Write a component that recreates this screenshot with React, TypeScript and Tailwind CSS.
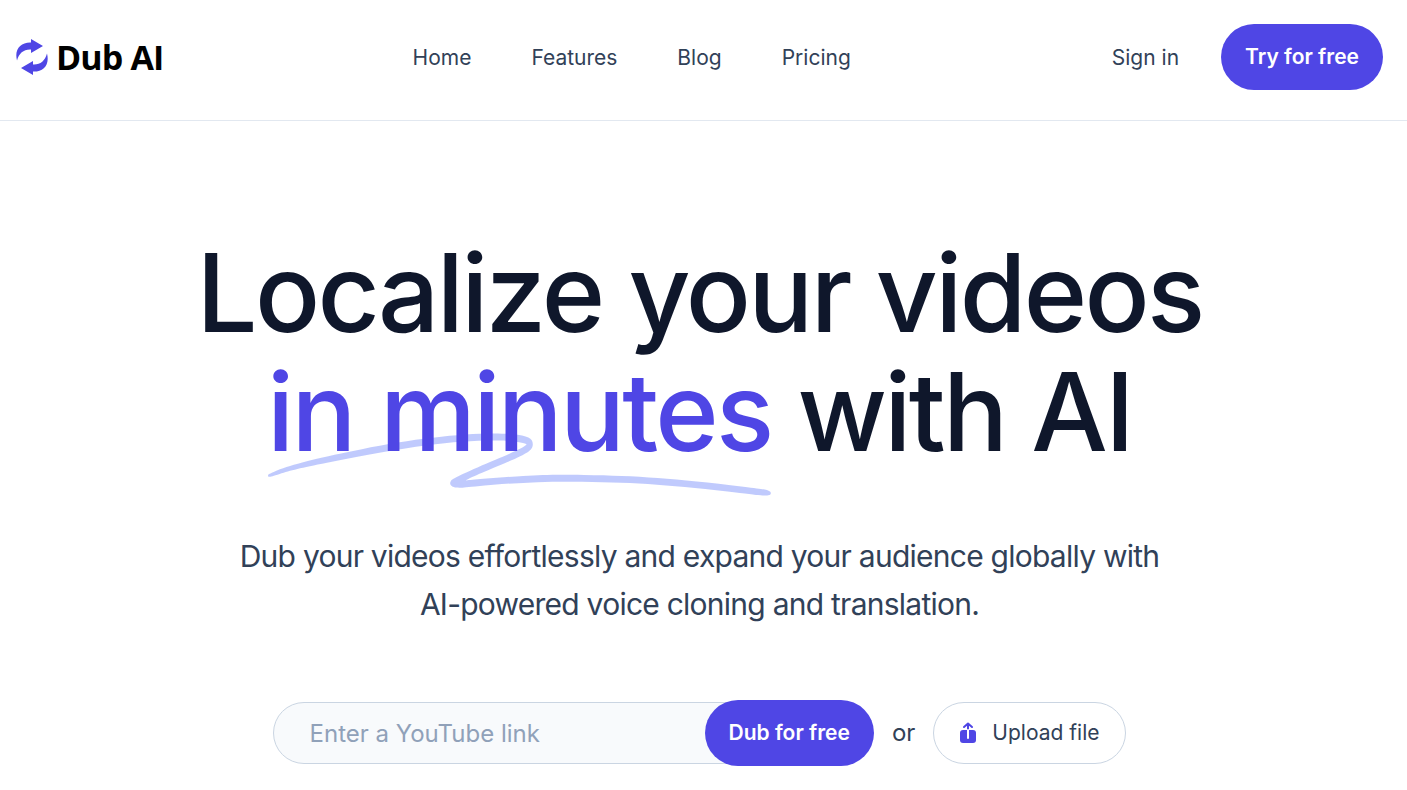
import { useState } from 'react';

const navLinks = [
  { label: 'Home', href: '#home' },
  { label: 'Features', href: '#features' },
  { label: 'Blog', href: '#blog' },
  { label: 'Pricing', href: '#pricing' },
];

function LogoMark() {
  return (
    <svg viewBox="0 0 32 36" className="h-9 w-8 fill-[#4f46e5]" aria-hidden="true">
      <path d="M15 0 27 7 15 14V10.500C8 10 3 14 1 21.500C-2 10 5 3 15 3.500Z" />
      <path d="M17 36 5 29 17 22V25.500C24 26 29 22 31 14.500C34 26 27 33 17 32.500Z" />
    </svg>
  );
}

function UploadIcon() {
  return (
    <svg viewBox="0 0 16 22" className="h-[22px] w-4" fill="none" aria-hidden="true">
      <rect x="0" y="8" width="16" height="13" rx="3" className="fill-[#4f46e5]" />
      <path d="M8 8V1.500M4 5 8 1.500l4 3.500" className="stroke-[#4f46e5]" strokeWidth="2" strokeLinecap="round" strokeLinejoin="round" />
      <path d="M8 8v8" stroke="white" strokeWidth="2" strokeLinecap="round" />
    </svg>
  );
}

function Underline() {
  return (
    <svg
      viewBox="0 0 418 42"
      preserveAspectRatio="none"
      className="absolute top-2/3 left-0 h-[0.58em] w-full fill-[#a5b4fc]/70"
      aria-hidden="true"
    >
      <path d="M203.371.916c-26.013-2.078-76.686 1.963-124.73 9.946L67.3 12.749C35.421 18.062 18.2 21.766 6.004 25.934 1.244 27.561.828 27.778.874 28.61c.07 1.214.828 1.121 9.595-1.176 9.072-2.377 17.15-3.92 39.246-7.496C123.565 7.986 157.869 4.492 195.942 5.046c7.461.108 19.25 1.696 19.17 2.582-.107 1.183-7.874 4.31-25.75 10.366-21.992 7.45-35.43 12.534-36.701 13.884-2.173 2.308-.202 4.407 4.442 4.734 2.654.187 3.263.157 15.593-.78 35.401-2.686 57.944-3.488 88.365-3.143 46.327.526 75.721 2.23 130.788 7.584 19.787 1.924 20.814 1.98 24.557 1.332l.066-.011c1.201-.203 1.53-1.825.399-2.335-2.911-1.31-4.893-1.604-22.048-3.261-57.509-5.556-87.871-7.36-132.059-7.842-23.239-.254-33.617-.116-50.627.674-11.629.54-42.371 2.494-46.696 2.967-2.359.259 8.133-3.625 26.504-9.81 23.239-7.825 27.934-10.149 28.304-14.005.417-4.348-3.529-6-16.878-7.066Z" />
    </svg>
  );
}

function Header() {
  return (
    <header className="flex items-center justify-between border-b border-slate-200 pt-6 pr-6 pb-[30px] pl-4">
      <a href="#" className="flex items-center gap-2">
        <LogoMark />
        <span className="font-['Open_Sans',sans-serif] text-[34px] leading-10 font-bold tracking-tight text-black">Dub AI</span>
      </a>
      <nav className="flex gap-9">
        {navLinks.map((link) => (
          <a key={link.label} href={link.href} className="px-3 pt-0.5 text-[21px] leading-8 text-slate-700">
            {link.label}
          </a>
        ))}
      </nav>
      <div className="flex items-center gap-[30px]">
        <a href="#sign-in" className="px-3 pt-0.5 text-[21px] leading-8 text-slate-700">
          Sign in
        </a>
        <button type="button" className="h-[66px] rounded-full bg-[#4f46e5] px-6 text-[21px] font-semibold text-white">
          Try for free
        </button>
      </div>
    </header>
  );
}

function Hero() {
  const [link, setLink] = useState('');

  return (
    <main className="pt-28 pr-6 pl-4 text-center">
      <h1 className="text-[108px] leading-[119px] font-medium tracking-tight text-slate-900">
        Localize your videos
        <br />
        <span className="relative whitespace-nowrap text-[#4f46e5]">
          <Underline />
          <span className="relative">in minutes</span>
        </span>{' '}
        with AI
      </h1>
      <p className="mx-auto mt-[61px] max-w-[950px] text-3xl leading-[48px] tracking-tight text-slate-700">
        Dub your videos effortlessly and expand your audience globally with AI-powered voice cloning and translation.
      </p>
      <form className="mt-[72px] flex items-center justify-center" onSubmit={(e) => e.preventDefault()}>
        <input
          type="url"
          aria-label="YouTube link"
          placeholder="Enter a YouTube link"
          value={link}
          onChange={(e) => setLink(e.target.value)}
          className="h-[62px] w-[480px] rounded-full border border-slate-300 bg-slate-50 px-9 text-2xl text-slate-900 placeholder:text-slate-400"
        />
        <button
          type="submit"
          className="relative -ml-12 h-[66px] rounded-full bg-[#4f46e5] px-6 text-[21px] font-semibold text-white"
        >
          Dub for free
        </button>
        <span className="px-[18px] text-2xl text-slate-700">or</span>
        <button
          type="button"
          className="flex h-[62px] items-center gap-4 rounded-full border border-slate-300 px-[26px] text-[21px] text-slate-700"
        >
          <UploadIcon />
          Upload file
        </button>
      </form>
    </main>
  );
}

export default function App() {
  return (
    <div className="min-h-screen bg-white font-['Inter',sans-serif]">
      <Header />
      <Hero />
    </div>
  );
}
